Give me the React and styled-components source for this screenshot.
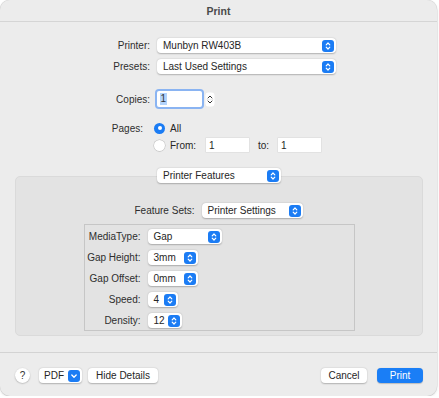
import styled, { createGlobalStyle } from "styled-components";

const GlobalStyle = createGlobalStyle`
  html, body {
    margin: 0;
    padding: 0;
    background: #ffffff;
  }
  body {
    font-family: "Liberation Sans", Arial, sans-serif;
    font-size: 10px;
    color: #333333;
  }
`;

const Window = styled.div`
  width: 437px;
  height: 396px;
  background: #ececec;
  border-radius: 10px;
  box-shadow: 0 0 0 0.5px rgba(0, 0, 0, 0.12), 0 1px 3px rgba(0, 0, 0, 0.12);
  display: flex;
  flex-direction: column;
  overflow: hidden;
`;

const TitleBar = styled.div`
  height: 21px;
  flex: none;
  display: flex;
  align-items: center;
  justify-content: center;
  border-bottom: 1px solid #d5d5d5;
  font-weight: bold;
  font-size: 10.5px;
  color: #4a4a4a;
`;

const Body = styled.div`
  flex: 1;
  display: flex;
  flex-direction: column;
  padding-top: 16px;
`;

const Row = styled.div`
  display: flex;
  align-items: center;
  height: ${p => p.$h || 15}px;
  margin-top: ${p => p.$mt || 0}px;
`;

const Label = styled.div`
  width: ${p => p.$w || 157}px;
  flex: none;
  text-align: right;
  padding-right: 7px;
  box-sizing: border-box;
  color: #2e2e2e;
  white-space: nowrap;
`;

const Popup = styled.div`
  width: ${p => p.$w}px;
  height: 15px;
  box-sizing: border-box;
  background: #ffffff;
  border-radius: 4px;
  box-shadow: 0 0.5px 1.5px rgba(0, 0, 0, 0.25);
  display: flex;
  align-items: center;
  justify-content: space-between;
  padding: 0 2px 0 6px;
  color: #262626;
  white-space: nowrap;
`;

const BlueKnob = styled.svg`
  width: 12px;
  height: 12px;
  flex: none;
`;

function Knob({ single }) {
  return (
    <BlueKnob viewBox="0 0 12 12">
      <rect width="12" height="12" rx="3" fill="#1b7cf4" />
      {single ? (
        <path d="M3.8 5 L6 7.2 L8.2 5" fill="none" stroke="#fff" strokeWidth="1.3" strokeLinecap="round" strokeLinejoin="round" />
      ) : (
        <>
          <path d="M4.2 4.8 L6 3 L7.8 4.8" fill="none" stroke="#fff" strokeWidth="1.2" strokeLinecap="round" strokeLinejoin="round" />
          <path d="M4.2 7.2 L6 9 L7.8 7.2" fill="none" stroke="#fff" strokeWidth="1.2" strokeLinecap="round" strokeLinejoin="round" />
        </>
      )}
    </BlueKnob>
  );
}

function Select({ w, children }) {
  return (
    <Popup $w={w}>
      <span>{children}</span>
      <Knob />
    </Popup>
  );
}

const CopiesField = styled.div`
  width: 45px;
  height: 16px;
  box-sizing: border-box;
  background: #ffffff;
  border-radius: 2px;
  box-shadow: 0 0 0 2px #8ab4f2;
  display: flex;
  align-items: center;
  padding-left: 3px;
`;

const Selected = styled.span`
  background: #b2d3fb;
  padding: 0 0.5px;
  line-height: 12px;
`;

const Stepper = styled.svg`
  width: 10px;
  height: 15px;
  margin-left: 3px;
  flex: none;
`;

const Field = styled.div`
  width: ${p => p.$w}px;
  height: 14px;
  box-sizing: border-box;
  background: #ffffff;
  box-shadow: 0 0 0 0.5px #d8d8d8;
  display: flex;
  align-items: center;
  padding-left: 3px;
  color: #262626;
`;

const Radio = styled.span`
  width: 11px;
  height: 11px;
  box-sizing: border-box;
  border-radius: 50%;
  flex: none;
  background: ${p => (p.$on ? "#1b7cf4" : "#ffffff")};
  box-shadow: ${p => (p.$on ? "none" : "0 0 0 0.5px #bdbdbd, 0 0.5px 1px rgba(0,0,0,0.15)")};
  display: flex;
  align-items: center;
  justify-content: center;
  margin-left: 4px;
  margin-right: 5px;

  &::after {
    content: "";
    width: 4px;
    height: 4px;
    border-radius: 50%;
    background: ${p => (p.$on ? "#ffffff" : "transparent")};
  }
`;

const RadioText = styled.span`
  color: #262626;
  width: ${p => (p.$w ? `${p.$w}px` : "auto")};
  margin-left: ${p => p.$ml || 0}px;
`;

const FeatureArea = styled.div`
  margin-top: 16px;
  display: flex;
  flex-direction: column;
  align-items: center;
`;

const FeatureSelect = styled.div`
  position: relative;
  z-index: 1;
  margin-left: 1px;
`;

const GroupBox = styled.div`
  width: 408px;
  height: 160px;
  box-sizing: border-box;
  margin-top: -7px;
  background: #e3e3e3;
  border: 1px solid #dadada;
  border-radius: 5px;
  display: flex;
  flex-direction: column;
  padding-top: 26px;
`;

const InnerBox = styled.div`
  margin-top: 6px;
  margin-left: 68px;
  width: 271px;
  height: 107px;
  box-sizing: border-box;
  border: 1px solid #c6c6c6;
  padding-top: 4px;
  display: flex;
  flex-direction: column;
  gap: 6px;
`;

const Footer = styled.div`
  margin-top: 16px;
  border-top: 1px solid #d3d3d3;
  flex: 1;
  display: flex;
  align-items: flex-start;
  padding: 15px 14px 0 15px;
  gap: 6px;
`;

const HelpButton = styled.div`
  width: 15px;
  height: 15px;
  border-radius: 50%;
  background: #ffffff;
  box-shadow: 0 0.5px 1.5px rgba(0, 0, 0, 0.3);
  display: flex;
  align-items: center;
  justify-content: center;
  font-size: 10px;
  color: #333;
  margin-right: 3px;
`;

const Button = styled.div`
  height: 15px;
  width: ${p => p.$w}px;
  flex: none;
  box-sizing: border-box;
  margin-right: ${p => p.$mr || 0}px;
  border-radius: 4px;
  background: ${p => (p.$primary ? "#1a7ef6" : "#ffffff")};
  color: ${p => (p.$primary ? "#ffffff" : "#262626")};
  box-shadow: ${p => (p.$primary ? "0 0.5px 1px rgba(0,0,0,0.2)" : "0 0.5px 1.5px rgba(0,0,0,0.25)")};
  display: flex;
  align-items: center;
  justify-content: center;
  gap: 4px;
  padding-left: ${p => p.$pl || 0}px;
  white-space: nowrap;
`;

const Spacer = styled.div`
  flex: 1;
`;

export default function App() {
  const innerRows = [
    ["MediaType:", "Gap", 74],
    ["Gap Height:", "3mm", 50],
    ["Gap Offset:", "0mm", 50],
    ["Speed:", "4", 30],
    ["Density:", "12", 34],
  ];

  return (
    <>
      <GlobalStyle />
      <Window>
        <TitleBar>Print</TitleBar>
        <Body>
          <Row>
            <Label>Printer:</Label>
            <Select w={179}>Munbyn RW403B</Select>
          </Row>
          <Row $mt={6}>
            <Label>Presets:</Label>
            <Select w={179}>Last Used Settings</Select>
          </Row>
          <Row $mt={17} $h={16}>
            <Label>Copies:</Label>
            <CopiesField>
              <Selected>1</Selected>
            </CopiesField>
            <Stepper viewBox="0 0 10 15">
              <rect x="0.5" y="0.5" width="9" height="14" rx="3" fill="#ffffff" />
              <path d="M3 6 L5 4 L7 6" fill="none" stroke="#333" strokeWidth="1" strokeLinecap="round" strokeLinejoin="round" />
              <path d="M3 9 L5 11 L7 9" fill="none" stroke="#333" strokeWidth="1" strokeLinecap="round" strokeLinejoin="round" />
              <line x1="1.5" y1="7.5" x2="8.5" y2="7.5" stroke="#e2e2e2" strokeWidth="0.6" />
            </Stepper>
          </Row>
          <Row $mt={14} $h={14}>
            <Label $w={150}>Pages:</Label>
            <Radio $on />
            <RadioText>All</RadioText>
          </Row>
          <Row $mt={3} $h={14}>
            <Label $w={150} />
            <Radio />
            <RadioText $w={36}>From:</RadioText>
            <Field $w={43}>1</Field>
            <RadioText $w={20} $ml={9}>to:</RadioText>
            <Field $w={43}>1</Field>
          </Row>

          <FeatureArea>
            <FeatureSelect>
              <Select w={124}>Printer Features</Select>
            </FeatureSelect>
            <GroupBox>
              <Row>
                <Label $w={186}>Feature Sets:</Label>
                <Select w={101}>Printer Settings</Select>
              </Row>
              <InnerBox>
                {innerRows.map(([label, value, w]) => (
                  <Row key={label}>
                    <Label $w={63}>{label}</Label>
                    <Select w={w}>{value}</Select>
                  </Row>
                ))}
              </InnerBox>
            </GroupBox>
          </FeatureArea>

          <Footer>
            <HelpButton>?</HelpButton>
            <Button $w={43} $pl={3}>
              <span>PDF</span>
              <Knob single />
            </Button>
            <Button $w={70}>Hide Details</Button>
            <Spacer />
            <Button $w={46} $mr={4}>Cancel</Button>
            <Button $primary $w={46}>Print</Button>
          </Footer>
        </Body>
      </Window>
    </>
  );
}
